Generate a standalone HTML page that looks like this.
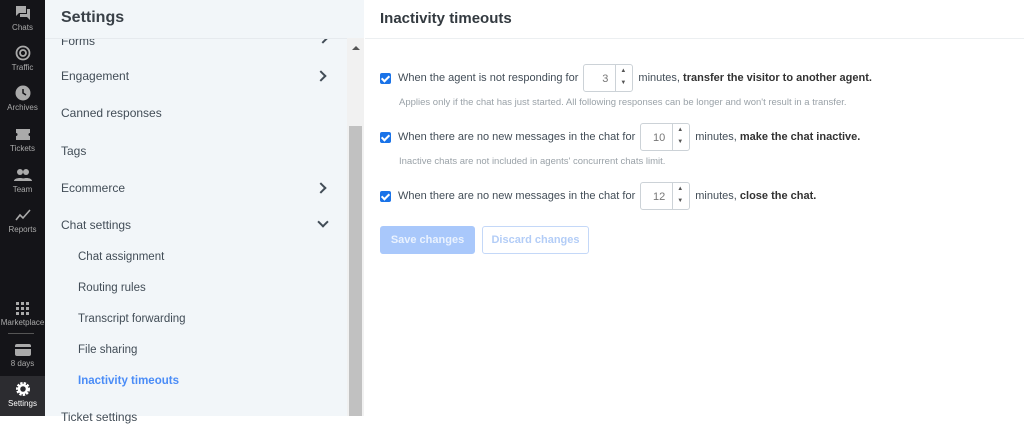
<!DOCTYPE html>
<html><head><style>
*{margin:0;padding:0;box-sizing:border-box}
body{width:1024px;height:416px;overflow:hidden;font-family:"Liberation Sans",sans-serif;background:#fff;position:relative}
.nav{position:absolute;left:0;top:0;width:45px;height:416px;background:#141418}
.ni{position:absolute;left:0;width:45px;text-align:center;color:#aaa;font-size:8px}
.ni svg{display:block;margin:0 auto 2px}
.set{position:absolute;left:45px;top:0;width:319px;height:416px;background:#f2f6f9;border-right:1px solid #e3e7ea}
.set h1{position:absolute;left:16px;top:9px;font-size:16px;font-weight:bold;color:#3a4148}
.hdrline{position:absolute;left:0;top:38px;width:319px;height:1px;background:#e6eaee}
.it{position:absolute;left:16px;font-size:12px;color:#424d57}
.sub{left:33px}
.ch{position:absolute;left:274px;width:8px;height:8px;border-right:2px solid #424d57;border-top:2px solid #424d57;transform:rotate(45deg)}
.sb{position:absolute;left:302px;top:38px;width:17px;height:378px;background:#f1f1f1}
.th{position:absolute;left:304px;top:126px;width:13px;height:290px;background:#c1c1c1}
.main h2{position:absolute;left:380px;top:10px;font-size:15px;color:#333a40;font-weight:bold}
.mline{position:absolute;left:365px;top:38px;width:659px;height:1px;background:#eceff1}
.row{position:absolute;left:380px;font-size:11px;color:#424d57;display:flex;align-items:center;height:28px}
.cb{width:11px;height:11px;background:#1a73e8;border-radius:2px;margin-right:7px;position:relative}
.cb:after{content:"";position:absolute;left:3px;top:1px;width:3px;height:6px;border:solid #fff;border-width:0 2px 2px 0;transform:rotate(45deg)}
.num{width:50px;height:28px;border:1px solid #ccd2d7;border-radius:3px;margin:0 5px;position:relative;font-size:11px;color:#777}
.num span{position:absolute;right:24px;top:8px}
.num i{position:absolute;left:31px;top:0;width:1px;height:26px;background:#ccd2d7}
.num b{position:absolute;left:36px;font-size:6px;color:#555}
.hint{position:absolute;left:399px;font-size:9.5px;color:#9aa2a8}
.btn{position:absolute;top:226px;height:28px;border-radius:3px;font-size:11px;font-weight:bold;display:flex;align-items:center;justify-content:center}
</style></head><body>
<div class="nav">
<div class="ni" style="top:5px"><svg width="16" height="16" viewBox="0 0 16 16"><path d="M1 1h10v7H4l-3 3z" fill="#aaa"/><path d="M12 4h3v11l-3-3H5v-3h7z" fill="#aaa"/></svg>Chats</div>
<div class="ni" style="top:45px"><svg width="16" height="16" viewBox="0 0 16 16" fill="none" stroke="#aaa" stroke-width="1.8"><circle cx="8" cy="8" r="6.5"/><circle cx="8" cy="8" r="3"/></svg>Traffic</div>
<div class="ni" style="top:85px"><svg width="16" height="16" viewBox="0 0 16 16"><circle cx="8" cy="8" r="7.5" fill="#aaa"/><path d="M8 4v4l3 2" stroke="#141418" stroke-width="1.5" fill="none"/></svg>Archives</div>
<div class="ni" style="top:126px"><svg width="16" height="16" viewBox="0 0 16 16"><path d="M1 3h14v4a1.5 1.5 0 000 3v4H1v-4a1.5 1.5 0 000-3z" fill="#aaa"/></svg>Tickets</div>
<div class="ni" style="top:167px"><svg width="18" height="16" viewBox="0 0 18 16"><circle cx="6" cy="5" r="3" fill="#aaa"/><circle cx="12" cy="5" r="3" fill="#aaa"/><path d="M0 14c0-4 12-4 12 0zM7 14c0-4 11-4 11 0z" fill="#aaa"/></svg>Team</div>
<div class="ni" style="top:207px"><svg width="16" height="16" viewBox="0 0 16 16"><path d="M1 13l4-5 3 3 7-8" stroke="#aaa" stroke-width="1.6" fill="none"/></svg>Reports</div>
<div class="ni" style="top:302px"><svg width="14" height="14" viewBox="0 0 14 14" fill="#aaa"><rect x="0" y="0" width="3" height="3"/><rect x="5" y="0" width="3" height="3"/><rect x="10" y="0" width="3" height="3"/><rect x="0" y="5" width="3" height="3"/><rect x="5" y="5" width="3" height="3"/><rect x="10" y="5" width="3" height="3"/><rect x="0" y="10" width="3" height="3"/><rect x="5" y="10" width="3" height="3"/><rect x="10" y="10" width="3" height="3"/></svg>Marketplace</div>
<div style="position:absolute;left:8px;top:333px;width:26px;height:1px;background:#555"></div>
<div class="ni" style="top:343px"><svg width="16" height="14" viewBox="0 0 16 14"><rect x="0" y="1" width="16" height="12" rx="2" fill="#aaa"/><rect x="0" y="4" width="16" height="2" fill="#141418"/></svg>8 days</div>
<div style="position:absolute;left:0;top:376px;width:45px;height:40px;background:#2c2c30"></div>
<div class="ni" style="top:381px;color:#fff"><svg width="16" height="16" viewBox="0 0 16 16"><circle cx="8" cy="8" r="5.5" fill="none" stroke="#fff" stroke-width="3" stroke-dasharray="2.2 1.1"/><circle cx="8" cy="8" r="4" fill="none" stroke="#fff" stroke-width="2.5"/></svg>Settings</div>
</div>
<div class="set">
<div class="it" style="top:34px;clip-path:inset(5px 0 0 0)">Forms</div><div class="ch" style="top:34px"></div>
<div style="position:absolute;left:0;top:0;width:319px;height:38px;background:#f2f6f9"></div>
<h1>Settings</h1><div class="hdrline"></div>
<div class="it" style="top:69px">Engagement</div><div class="ch" style="top:72px;left:272px"></div>
<div class="it" style="top:106px">Canned responses</div>
<div class="it" style="top:144px">Tags</div>
<div class="it" style="top:181px">Ecommerce</div><div class="ch" style="top:184px;left:272px"></div>
<div class="it" style="top:218px">Chat settings</div><div class="ch" style="top:218px;left:274px;transform:rotate(135deg)"></div>
<div class="it sub" style="top:251px;font-size:11.5px">Chat assignment</div>
<div class="it sub" style="top:282px;font-size:11.5px">Routing rules</div>
<div class="it sub" style="top:313px;font-size:11.5px">Transcript forwarding</div>
<div class="it sub" style="top:344px;font-size:11.5px">File sharing</div>
<div class="it sub" style="top:375px;font-size:11.5px;color:#4a8cf7;font-weight:bold">Inactivity timeouts</div>
<div class="it" style="top:410px">Ticket settings</div>
<div class="sb"></div><div class="th"></div>
<div style="position:absolute;left:307px;top:46px;border:4px solid transparent;border-bottom:4px solid #555;border-top:0"></div>
</div>
<div class="main">
<h2>Inactivity timeouts</h2><div class="mline"></div>
<div class="row" style="top:64px"><div class="cb"></div>When the agent is not responding for<div class="num"><span>3</span><i></i><b style="top:3px">▲</b><b style="top:15px">▼</b></div>minutes,&nbsp;<b style="color:#333">transfer the visitor to another agent.</b></div>
<div class="hint" style="top:97px">Applies only if the chat has just started. All following responses can be longer and won't result in a transfer.</div>
<div class="row" style="top:123px"><div class="cb"></div>When there are no new messages in the chat for<div class="num"><span>10</span><i></i><b style="top:3px">▲</b><b style="top:15px">▼</b></div>minutes,&nbsp;<b style="color:#333">make the chat inactive.</b></div>
<div class="hint" style="top:156px">Inactive chats are not included in agents' concurrent chats limit.</div>
<div class="row" style="top:182px"><div class="cb"></div>When there are no new messages in the chat for<div class="num"><span>12</span><i></i><b style="top:3px">▲</b><b style="top:15px">▼</b></div>minutes,&nbsp;<b style="color:#333">close the chat.</b></div>
<div class="btn" style="left:380px;width:95px;background:#a9c8fb;color:#eaf2fe">Save changes</div>
<div class="btn" style="left:482px;width:107px;border:1px solid #c4d8f8;color:#b3cdf7">Discard changes</div>
</div>
</body></html>
